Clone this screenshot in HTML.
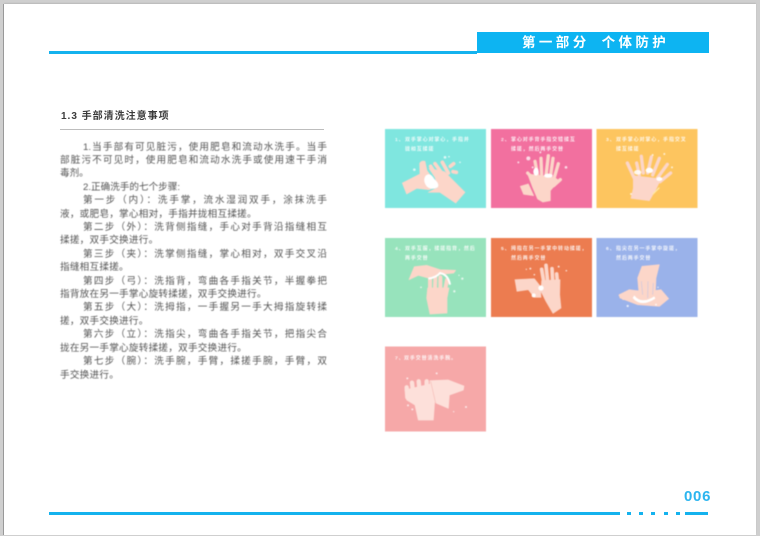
<!DOCTYPE html>
<html lang="zh">
<head>
<meta charset="utf-8">
<style>
html,body{margin:0;padding:0;width:760px;height:536px;overflow:hidden;background:#cfcfcf}
body{position:relative;font-family:"Liberation Sans","Noto Sans CJK SC",sans-serif}
.page{position:absolute;left:4px;top:4px;width:752px;height:531px;background:#fff;box-shadow:-1px 0 0 #999,0 -1px 1px #bbb}
.a{position:absolute}
.l{position:absolute;left:60px;width:267px;height:13px;line-height:13px;font-size:9.6px;color:#555;white-space:nowrap;filter:blur(.4px)}
.j{text-align:justify;text-align-last:justify;white-space:normal}
.i{left:83px;width:244px}
.bar{background:#14b2ee}
svg text{font-family:"Liberation Sans","Noto Sans CJK SC",sans-serif;font-size:15px;font-weight:bold;fill:#fff;letter-spacing:2.7px;opacity:.88}
.h{fill:#fcd6c9;stroke:#fcd6c9;stroke-width:2;stroke-linejoin:round;stroke-linecap:round}
.f{fill:none;stroke:#fcd6c9;stroke-width:13;stroke-linecap:round}
.w{fill:#fff}
.d{fill:#fff;opacity:.75}
</style>
</head>
<body>
<div class="page"></div>
<div class="a bar" style="left:49px;top:50.5px;width:428px;height:3px"></div>
<div class="a" style="left:477px;top:32px;width:232px;height:21px;background:#0db4f2"></div>
<div class="a" style="left:522px;top:33px;height:19px;line-height:19px;font-size:13.5px;font-weight:bold;color:#fff;letter-spacing:3.4px;white-space:nowrap;filter:blur(.25px)">第一部分<span style="margin-left:12px">个体防护</span></div>

<div class="a" style="left:61px;top:110px;height:13px;line-height:13px;font-size:10px;font-weight:bold;color:#3a3a3a;letter-spacing:1px;white-space:nowrap;filter:blur(.25px)">1.3 手部清洗注意事项</div>
<div class="a" style="left:60px;top:128.5px;width:264px;height:1.5px;background:#bdbdbd"></div>

<div class="l i j" style="top:140.5px">1.当手部有可见脏污，使用肥皂和流动水洗手。当手</div>
<div class="l j" style="top:153.9px">部脏污不可见时，使用肥皂和流动水洗手或使用速干手消</div>
<div class="l" style="top:167.3px">毒剂。</div>
<div class="l i" style="top:180.7px">2.正确洗手的七个步骤:</div>
<div class="l i j" style="top:194.1px">第一步（内）：洗手掌，流水湿润双手，涂抹洗手</div>
<div class="l" style="top:207.6px;letter-spacing:.25px">液，或肥皂，掌心相对，手指并拢相互揉搓。</div>
<div class="l i j" style="top:221px">第二步（外）：洗背侧指缝，手心对手背沿指缝相互</div>
<div class="l" style="top:234.4px;letter-spacing:.25px">揉搓，双手交换进行。</div>
<div class="l i j" style="top:247.8px">第三步（夹）：洗掌侧指缝，掌心相对，双手交叉沿</div>
<div class="l" style="top:261.2px;letter-spacing:.25px">指缝相互揉搓。</div>
<div class="l i j" style="top:274.6px">第四步（弓）：洗指背，弯曲各手指关节，半握拳把</div>
<div class="l" style="top:288px;letter-spacing:.25px">指背放在另一手掌心旋转揉搓，双手交换进行。</div>
<div class="l i j" style="top:301.4px">第五步（大）：洗拇指，一手握另一手大拇指旋转揉</div>
<div class="l" style="top:314.9px;letter-spacing:.25px">搓，双手交换进行。</div>
<div class="l i j" style="top:328.3px">第六步（立）：洗指尖，弯曲各手指关节，把指尖合</div>
<div class="l" style="top:341.7px;letter-spacing:.25px">拢在另一手掌心旋转揉搓，双手交换进行。</div>
<div class="l i j" style="top:355.1px">第七步（腕）：洗手腕，手臂，揉搓手腕，手臂，双</div>
<div class="l" style="top:368.5px;letter-spacing:.25px">手交换进行。</div>

<svg class="a" style="left:0;top:0;filter:blur(.45px)" width="760" height="536" viewBox="0 0 760 536">
  <rect x="385" y="129" width="101" height="79" fill="#7fe6df"/>
  <rect x="491" y="129" width="101" height="79" fill="#f2709f"/>
  <rect x="596.500" y="129" width="101" height="79" fill="#fdc55f"/>
  <rect x="385" y="238" width="101" height="79" fill="#97e3bc"/>
  <rect x="491" y="238" width="101" height="79" fill="#ec7c50"/>
  <rect x="596.500" y="238" width="101" height="79" fill="#9ab2ea"/>
  <rect x="385" y="346.500" width="101" height="85" fill="#f6a8a8"/>

  <!-- Panel 1 -->
  <g transform="translate(385,129) scale(.33333)">
    <text x="30" y="36">1、</text><text x="60" y="36">双手掌心对掌心，手指并</text>
    <text x="60" y="64">拢相互揉搓</text>
    <path class="h" d="M52 162L105 135L104 104Q108 94 120 97L126 125L160 170L132 182L95 178L65 195Z"/>
    <path class="h" d="M132 118L178 128L240 190L212 222L165 190L130 190L160 175L150 145Z"/>
    <path class="f" d="M162 152L137 112M176 140L150 104M190 132L172 100M204 128L214 130M196 112L206 104" style="stroke-width:11"/>
    <path class="w" d="M122 140Q135 128 148 150Q165 165 158 175Q140 185 125 172Q112 155 122 140Z"/>
    <circle class="d" cx="88" cy="122" r="4"/><circle class="d" cx="180" cy="85" r="4"/><circle class="d" cx="192" cy="83" r="2.500"/><circle class="d" cx="225" cy="100" r="2.500"/>
  </g>

  <!-- Panel 2 -->
  <g transform="translate(491,129) scale(.33333)">
    <text x="30" y="36">2、</text><text x="60" y="36">掌心对手背手指交错揉互</text>
    <text x="60" y="64">揉搓，然后两手交替</text>
    <path class="h" d="M88 172L112 165L128 200L98 196Z"/>
    <path class="h" d="M110 135L190 145L204 155L178 185L178 215L155 219L140 210L125 175Z"/>
    <path class="f" d="M128 150L110 132M140 140L132 97M152 140L150 88M165 140L172 80M178 145L186 88M188 152L202 104M188 170L208 152" style="stroke-width:10"/>
    <ellipse class="w" cx="135" cy="128" rx="8" ry="12"/><ellipse class="w" cx="172" cy="140" rx="13" ry="6"/>
    <circle class="d" cx="112" cy="88" r="6"/><circle class="d" cx="82" cy="100" r="3"/><circle class="d" cx="225" cy="115" r="4"/><circle class="d" cx="125" cy="115" r="3"/><circle class="d" cx="148" cy="70" r="3"/>
  </g>

  <!-- Panel 3 -->
  <g transform="translate(596,129) scale(.33333)">
    <text x="30" y="36">3、</text><text x="60" y="36">双手掌心对掌心，手指交叉</text>
    <text x="60" y="64">揉互揉搓</text>
    <path class="h" d="M112 140L195 150L180 180L160 215L105 208L112 178Z"/>
    <path class="f" d="M115 148L94 102M130 138L122 102M142 132L136 82M155 132L166 84M170 138L190 88M185 146L214 106M192 158L224 132" style="stroke-width:10"/>
    <ellipse class="w" cx="125" cy="130" rx="11" ry="7" opacity=".85"/><ellipse class="w" cx="160" cy="124" rx="11" ry="8"/><ellipse class="w" cx="190" cy="150" rx="9" ry="6"/>
    <circle class="d" cx="205" cy="75" r="3"/><circle class="d" cx="170" cy="78" r="3"/><circle class="d" cx="228" cy="115" r="3"/><circle class="d" cx="105" cy="195" r="3"/>
    <path d="M170 196L190 176" stroke="#ffe9a8" stroke-width="4" fill="none"/>
  </g>

  <!-- Panel 4 -->
  <g transform="translate(385,238) scale(.33333)">
    <text x="30" y="36">4、</text><text x="60" y="36">双手互握，揉搓指背，然后</text>
    <text x="60" y="64">两手交替</text>
    <path class="h" d="M72 125L88 86L125 82L165 95L212 97L206 105L160 110L130 120L100 112Z"/>
    <path class="h" d="M128 150L192 150L186 180L186 225L135 228L125 180Z"/>
    <path class="f" d="M135 155L135 125M150 150L151 118M166 150L166 118M181 152L186 126" style="stroke-width:12"/>
    <path d="M130 122Q155 118 165 105Q190 110 195 140" fill="none" stroke="#fff" stroke-width="6"/>
    <circle class="d" cx="232" cy="122" r="3.500"/><circle class="d" cx="222" cy="112" r="2"/><circle class="d" cx="208" cy="160" r="3.500"/><circle class="d" cx="108" cy="148" r="2.500"/>
  </g>

  <!-- Panel 5 -->
  <g transform="translate(491,238) scale(.33333)">
    <text x="30" y="36">5、</text><text x="60" y="36">拇指在另一手掌中转动揉搓，</text>
    <text x="60" y="64">然后两手交替</text>
    <path class="h" d="M152 128L207 125L206 170L210 210L186 226L165 190L150 160Z"/>
    <path class="f" d="M158 130L152 94M170 130L165 82M185 130L183 92M199 130L197 108" style="stroke-width:11"/>
    <path class="h" d="M72 125L130 122L148 145L150 178L130 178L112 155L78 160Z"/>
    <circle class="w" cx="150" cy="150" r="8"/><circle class="w" cx="128" cy="172" r="6"/>
    <circle class="d" cx="118" cy="92" r="3"/><circle class="d" cx="106" cy="94" r="2"/><circle class="d" cx="203" cy="86" r="3"/><circle class="d" cx="226" cy="98" r="2.500"/><circle class="d" cx="130" cy="110" r="2.500"/>
  </g>

  <!-- Panel 6 -->
  <g transform="translate(596,238) scale(.33333)">
    <text x="30" y="36">6、</text><text x="60" y="36">指尖在另一手掌中旋搓，</text>
    <text x="60" y="64">然后两手交替</text>
    <path class="h" d="M70 170L100 155L150 162L195 155L218 182L190 205L125 200L72 180Z"/>
    <path class="f" d="M72 172L120 170M82 182L125 180M100 160L130 165" style="stroke-width:8"/>
    <path class="w" d="M115 172Q135 200 175 175L178 182Q135 210 110 180Z"/>
    <path class="h" d="M138 85L190 80L180 120L178 165L152 185L130 178L125 120Z"/>
    <path d="M140 170L136 130M155 180L156 130M170 170L172 135" stroke="#bfc3e6" stroke-width="2" fill="none" opacity=".8"/>
    <circle class="d" cx="95" cy="204" r="3.500"/><circle class="d" cx="180" cy="200" r="3"/><circle class="d" cx="186" cy="148" r="2"/>
  </g>

  <!-- Panel 7 -->
  <g transform="translate(380,340) scale(.33333)">
    <text x="45" y="59">7、</text><text x="72" y="59">双手交替清洗手腕。</text>
    <path class="h" style="fill:#fde0da;stroke:#fde0da" d="M150 122L205 120L252 138L250 150L208 165L205 205L170 190L150 170Z"/>
    <path class="f" style="stroke:#fde0da;stroke-width:13" d="M82 172L80 142M100 165L96 128M120 165L116 124M140 165L140 124"/>
    <path class="h" style="fill:#fde0da;stroke:#fde0da" d="M75 150L160 130L165 170L160 240L115 240L105 195L80 180Z"/>
    <path d="M152 124L167 190" stroke="#f6bdb8" stroke-width="2" fill="none"/>
    <circle class="d" cx="82" cy="115" r="3"/><circle class="d" cx="170" cy="100" r="3"/><circle class="d" cx="84" cy="196" r="3"/><circle class="d" cx="97" cy="208" r="3"/><circle class="d" cx="258" cy="201" r="3"/><circle class="d" cx="221" cy="215" r="2"/>
  </g>
</svg>

<div class="a" style="left:684px;top:488px;height:17px;line-height:17px;font-size:15px;font-weight:bold;color:#2cb5ef;letter-spacing:.7px;filter:blur(.2px)">006</div>
<div class="a bar" style="left:49px;top:511.500px;width:571px;height:3px"></div>
<div class="a bar" style="left:627px;top:511.500px;width:4px;height:3px"></div>
<div class="a bar" style="left:639px;top:511.500px;width:4px;height:3px"></div>
<div class="a bar" style="left:651px;top:511.500px;width:4px;height:3px"></div>
<div class="a bar" style="left:664px;top:511.500px;width:4px;height:3px"></div>
<div class="a bar" style="left:676px;top:511.500px;width:4px;height:3px"></div>
<div class="a bar" style="left:685px;top:511.500px;width:23px;height:3px"></div>
</body>
</html>
